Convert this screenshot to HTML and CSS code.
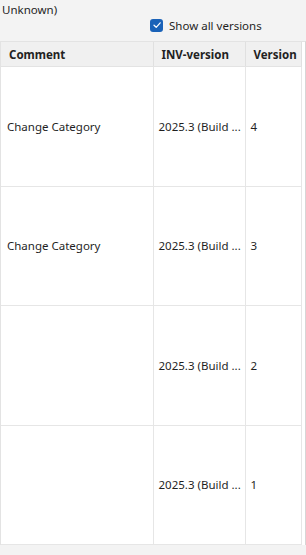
FILE: index.html
```html
<!DOCTYPE html>
<html>
<head>
<meta charset="utf-8">
<link rel="stylesheet" href="styles.css">
</head>
<body>
<div class="panel">
  <div class="owner">Unknown)</div>
  <div class="toolbar">
    <label class="check">
      <span class="box"><svg width="10" height="10" viewBox="0 0 10 10"><path d="M2 5.2 L4.2 7.3 L8.2 2.8" fill="none" stroke="#fff" stroke-width="1.2" stroke-linecap="round" stroke-linejoin="round"/></svg></span>
      <span>Show all versions</span>
    </label>
  </div>
  <div class="grid-wrap">
    <table class="grid">
      <colgroup><col class="c1"><col class="c2"><col class="c3"></colgroup>
      <thead>
        <tr><th>Comment</th><th>INV-version</th><th>Version</th></tr>
      </thead>
      <tbody>
        <tr><td>Change Category</td><td>2025.3 (Build ...</td><td>4</td></tr>
        <tr><td>Change Category</td><td>2025.3 (Build ...</td><td>3</td></tr>
        <tr><td></td><td>2025.3 (Build ...</td><td>2</td></tr>
        <tr><td></td><td>2025.3 (Build ...</td><td>1</td></tr>
      </tbody>
    </table>
  </div>
</div>
</body>
</html>
```
FILE: styles.css
```css
html, body {
  margin: 0;
  padding: 0;
  background: #f3f3f3;
  font-family: "Noto Sans", "Open Sans", sans-serif;
  font-size: 11.5px;
  color: #1f1f1f;
}
.panel {
  width: 306px;
  height: 555px;
  display: flex;
  flex-direction: column;
}
.owner {
  height: 16px;
  line-height: 20px;
  padding-left: 2px;
}
.toolbar {
  height: 18px;
  margin-bottom: 7px;
  display: flex;
  align-items: center;
  padding-left: 150px;
}
.check {
  display: flex;
  align-items: center;
  gap: 6px;
}
.box {
  width: 13px;
  height: 13px;
  border-radius: 3px;
  background: #1a62b8;
  display: flex;
  align-items: center;
  justify-content: center;
}
.grid-wrap {
  width: 304px;
  background: #ffffff;
  border-right: 1px solid #d6d6d6;
  border-left: 1px solid #e3e3e3;
  border-top: 1px solid #e3e3e3;
}
.grid {
  border-collapse: collapse;
  width: 300px;
  table-layout: fixed;
  border-right: 1px solid #d9d9d9;
}
.c1 { width: 152px; }
.c2 { width: 92px; }
.c3 { width: 56px; }
.grid th {
  background: #f0f0f0;
  height: 24px;
  text-align: left;
  font-weight: 700;
  padding: 0 4px 0 8px;
  border-right: 1px solid #e0e0e0;
  border-bottom: 1px solid #e3e3e3;
  white-space: nowrap;
  overflow: hidden;
  color: #222;
}
.grid td {
  height: 118.5px;
  padding: 0 5px;
  border-right: 1px solid #e6e6e6;
  border-bottom: 1px solid #e6e6e6;
  white-space: nowrap;
  overflow: hidden;
  vertical-align: middle;
}
.grid td:first-child { padding-left: 6px; }
```
